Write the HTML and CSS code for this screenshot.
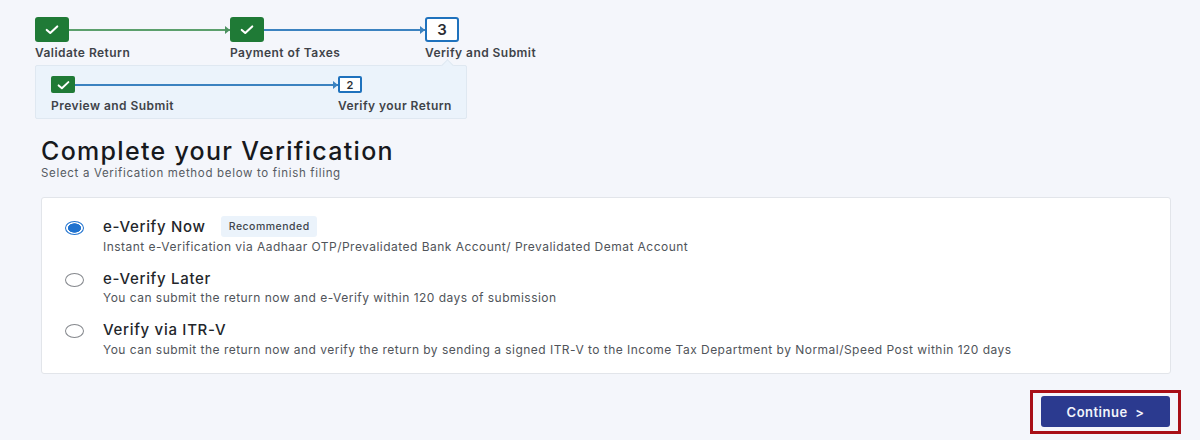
FILE: index.html
```html
<!DOCTYPE html>
<html lang="en">
<head>
<meta charset="utf-8">
<title>Complete your Verification</title>
<link rel="stylesheet" href="styles.css">
</head>
<body>
<main class="page">
  <div class="stepper">
    <div class="step">
      <div class="track">
        <span class="box done"><svg viewBox="0 0 16 12" class="check"><path d="M2 6.5 6 10 14 2.5"/></svg></span>
        <span class="line green"></span>
      </div>
      <div class="label">Validate Return</div>
    </div>
    <div class="step">
      <div class="track">
        <span class="box done"><svg viewBox="0 0 16 12" class="check"><path d="M2 6.5 6 10 14 2.5"/></svg></span>
        <span class="line blue"></span>
      </div>
      <div class="label">Payment of Taxes</div>
    </div>
    <div class="step last">
      <div class="track">
        <span class="box current">3</span>
      </div>
      <div class="label">Verify and Submit</div>
    </div>
  </div>

  <div class="subpanel">
    <span class="notch"></span>
    <div class="substeps">
      <div class="substep">
        <div class="track small">
          <span class="box done small"><svg viewBox="0 0 16 12" class="check"><path d="M2 6.5 6 10 14 2.5"/></svg></span>
          <span class="line blue"></span>
        </div>
        <div class="label sub">Preview and Submit</div>
      </div>
      <div class="substep end">
        <div class="track small">
          <span class="box current small">2</span>
        </div>
        <div class="label sub">Verify your Return</div>
      </div>
    </div>
  </div>

  <section class="intro">
    <h1>Complete your Verification</h1>
    <p>Select a Verification method below to finish filing</p>
  </section>

  <section class="card">
    <div class="option">
      <span class="radio on"></span>
      <div class="text">
        <div class="title-row"><span class="title">e-Verify Now</span><span class="tag">Recommended</span></div>
        <div class="desc">Instant e-Verification via Aadhaar OTP/Prevalidated Bank Account/ Prevalidated Demat Account</div>
      </div>
    </div>
    <div class="option">
      <span class="radio"></span>
      <div class="text">
        <div class="title-row"><span class="title">e-Verify Later</span></div>
        <div class="desc">You can submit the return now and e-Verify within 120 days of submission</div>
      </div>
    </div>
    <div class="option">
      <span class="radio"></span>
      <div class="text">
        <div class="title-row"><span class="title">Verify via ITR-V</span></div>
        <div class="desc">You can submit the return now and verify the return by sending a signed ITR-V to the Income Tax Department by Normal/Speed Post within 120 days</div>
      </div>
    </div>
  </section>

  <div class="actions">
    <div class="highlight">
      <button class="continue" type="button">Continue &nbsp;&gt;</button>
    </div>
  </div>
</main>
</body>
</html>
```

FILE: styles.css
```css
* { box-sizing: border-box; }
html, body { margin: 0; padding: 0; }
body {
  width: 1200px;
  height: 440px;
  overflow: hidden;
  background: #f4f6fb;
  font-family: Inter, Roboto, "Liberation Sans", sans-serif;
  color: #1c1f24;
}
.page { padding: 17px 19px 0 35px; }

.stepper { display: flex; }
.step { width: 195px; }
.step.last { width: 140px; }
.track { display: flex; align-items: center; height: 25px; }
.box {
  flex: none;
  width: 34px;
  height: 25px;
  border-radius: 3px;
  display: flex;
  align-items: center;
  justify-content: center;
  font-size: 15px;
  font-weight: 600;
  color: #2a2d33;
}
.box.done { background: #1f7a36; }
.box.current { background: #fff; border: 2px solid #1f72bd; }
.box.small { width: 24px; height: 17px; font-size: 11px; border-radius: 2px; }
.check { width: 14px; height: 11px; fill: none; stroke: #fff; stroke-width: 2.4; stroke-linecap: round; stroke-linejoin: round; }
.box.small .check { width: 13px; height: 10px; }
.line { position: relative; flex: 1; height: 2px; }
.line.green { background: #5b9f6c; }
.line.blue { background: #3b82c0; }
.line::after {
  content: "";
  position: absolute;
  right: 0;
  top: -3px;
  border-left: 5px solid #3b82c0;
  border-top: 4px solid transparent;
  border-bottom: 4px solid transparent;
}
.line.green::after { border-left-color: #4b9160; }
.label {
  margin-top: 4px;
  font-size: 12px;
  line-height: 14px;
  font-weight: 600;
  letter-spacing: .45px;
  color: #3f4349;
  white-space: nowrap;
}

.subpanel {
  position: relative;
  width: 432px;
  height: 54px;
  margin-top: 5px;
  padding: 10px 15px 0;
  background: #ebf3fb;
  border: 1px solid #dfe8f1;
  border-radius: 2px;
}
.notch {
  position: absolute;
  top: -5px;
  left: calc(100% - 23px);
  width: 9px;
  height: 9px;
  background: #ebf3fb;
  border-left: 1px solid #dfe8f1;
  border-top: 1px solid #dfe8f1;
  transform: rotate(45deg);
}
.substeps { display: flex; }
.substep { width: 287px; }
.substep.end { width: 113px; }
.track.small { height: 17px; }
.label.sub { margin-top: 6px; }

.intro { padding: 19px 0 0 6px; }
.intro h1 {
  margin: 0;
  font-size: 25px;
  line-height: 26px;
  font-weight: 500;
  letter-spacing: 1.3px;
  color: #17191d;
}
.intro p {
  margin: 2px 0 0;
  font-size: 11.5px;
  line-height: 14px;
  letter-spacing: .68px;
  color: #565b62;
}

.card {
  margin: 17px 0 0 6px;
  width: 1130px;
  height: 177px;
  padding: 18px 24px 0 23px;
  background: #fff;
  border: 1px solid #e2e5ea;
  border-radius: 3px;
}
.option { display: flex; height: 51.5px; }
.radio {
  flex: none;
  width: 19px;
  height: 14px;
  margin-top: 5px;
  border: 1.5px solid #85888d;
  border-radius: 50%;
  background: #fff;
}
.radio.on {
  border-color: #1f72cf;
  background: radial-gradient(ellipse at center, #1f72cf 52%, #fff 58%);
}
.text { margin-left: 19px; }
.title-row { display: flex; align-items: center; height: 21px; }
.title {
  font-size: 15px;
  font-weight: 500;
  letter-spacing: .7px;
  color: #23262b;
}
.tag {
  margin-left: 15.5px;
  padding: 0 7.5px;
  height: 21px;
  line-height: 21px;
  background: #ebf3fb;
  border-radius: 3px;
  font-size: 10.5px;
  font-weight: 500;
  letter-spacing: .5px;
  color: #41464d;
}
.desc {
  margin-top: 2.5px;
  font-size: 12px;
  line-height: 14px;
  letter-spacing: .47px;
  color: #50545a;
  white-space: nowrap;
}

.actions { display: flex; justify-content: flex-end; margin-top: 16px; }
.highlight {
  width: 151px;
  height: 44px;
  border: 3px solid #a80f17;
  display: flex;
  align-items: center;
  justify-content: center;
}
.continue {
  width: 129px;
  height: 31px;
  margin-bottom: 1px;
  border: 0;
  border-radius: 3px;
  background: #2b3a8f;
  color: #f2f4fb;
  font-family: inherit;
  font-size: 13px;
  font-weight: 600;
  letter-spacing: .5px;
}
```
